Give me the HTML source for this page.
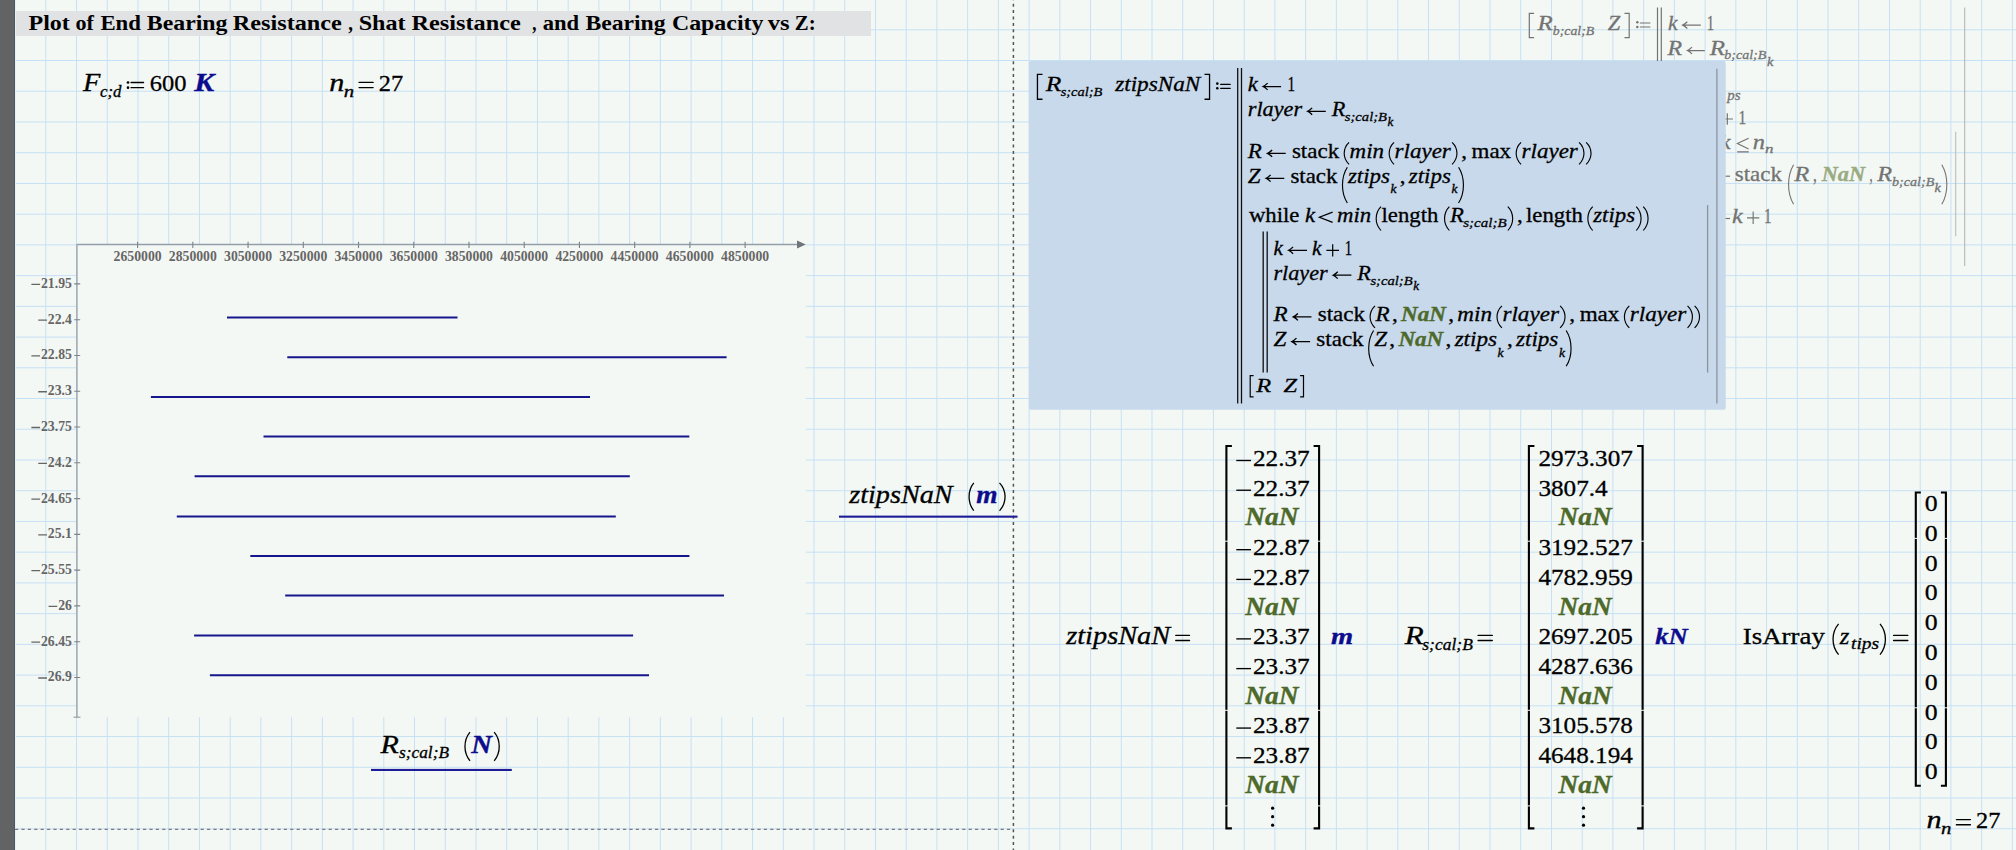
<!DOCTYPE html>
<html><head><meta charset="utf-8"><style>
html,body{margin:0;padding:0;width:2016px;height:850px;overflow:hidden;background:#f4f8f4}
svg{display:block}
text{font-family:"Liberation Serif",serif;white-space:pre}
.r{font-style:normal;font-weight:normal;stroke-width:.3px}
.i{font-style:italic;font-weight:normal;stroke-width:.3px}
.b{font-style:normal;font-weight:bold;stroke-width:0}
.bi{font-style:italic;font-weight:bold;stroke-width:.35px}
</style></head><body>
<svg width="2016" height="850" viewBox="0 0 2016 850">
<rect x="0" y="0" width="2016" height="850" fill="#f4f8f4"/>
<path d="M45.80 0V850M76.53 0V850M107.25 0V850M137.98 0V850M168.71 0V850M199.44 0V850M230.17 0V850M260.89 0V850M291.62 0V850M322.35 0V850M353.08 0V850M383.81 0V850M414.53 0V850M445.26 0V850M475.99 0V850M506.72 0V850M537.45 0V850M568.17 0V850M598.90 0V850M629.63 0V850M660.36 0V850M691.09 0V850M721.81 0V850M752.54 0V850M783.27 0V850M814.00 0V850M844.73 0V850M875.45 0V850M906.18 0V850M936.91 0V850M967.64 0V850M998.37 0V850M1029.09 0V850M1059.82 0V850M1090.55 0V850M1121.28 0V850M1152.01 0V850M1182.73 0V850M1213.46 0V850M1244.19 0V850M1274.92 0V850M1305.65 0V850M1336.37 0V850M1367.10 0V850M1397.83 0V850M1428.56 0V850M1459.29 0V850M1490.01 0V850M1520.74 0V850M1551.47 0V850M1582.20 0V850M1612.93 0V850M1643.65 0V850M1674.38 0V850M1705.11 0V850M1735.84 0V850M1766.57 0V850M1797.29 0V850M1828.02 0V850M1858.75 0V850M1889.48 0V850M1920.21 0V850M1950.93 0V850M1981.66 0V850M2012.39 0V850M15 29.80H2016M15 60.53H2016M15 91.25H2016M15 121.98H2016M15 152.71H2016M15 183.44H2016M15 214.17H2016M15 244.89H2016M15 275.62H2016M15 306.35H2016M15 337.08H2016M15 367.81H2016M15 398.53H2016M15 429.26H2016M15 459.99H2016M15 490.72H2016M15 521.45H2016M15 552.17H2016M15 582.90H2016M15 613.63H2016M15 644.36H2016M15 675.09H2016M15 705.81H2016M15 736.54H2016M15 767.27H2016M15 798.00H2016M15 828.73H2016" stroke="#c6e0f5" stroke-width="1" fill="none"/>
<rect x="0" y="0" width="15" height="850" fill="#626364"/>
<rect x="14" y="0" width="1" height="850" fill="#56575a"/>
<rect x="15" y="0" width="1" height="850" fill="#e3f1fa"/>
<path d="M1013.4 -2.7V850" stroke="#555" stroke-width="1.5" stroke-dasharray="3 3.4" fill="none"/>
<path d="M15 829.3H1011" stroke="#7c7c7c" stroke-width="1.2" stroke-dasharray="3.2 3.2" fill="none"/>
<rect x="16" y="11" width="855" height="25" fill="#e1e2e4"/>
<text class="b" font-size="22" fill="#000" stroke="#000" transform="translate(28.50,30.00) scale(1.0891,1.0000)">Plot</text>
<text class="b" font-size="22" fill="#000" stroke="#000" transform="translate(75.40,30.00) scale(1.0040,1.0000)">of</text>
<text class="b" font-size="22" fill="#000" stroke="#000" transform="translate(100.40,30.00) scale(1.0377,1.0000)">End</text>
<text class="b" font-size="22" fill="#000" stroke="#000" transform="translate(146.80,30.00) scale(1.0832,1.0000)">Bearing</text>
<text class="b" font-size="22" fill="#000" stroke="#000" transform="translate(232.70,30.00) scale(1.1040,1.0000)">Resistance</text>
<text class="b" font-size="22" fill="#000" stroke="#000" transform="translate(348.30,30.00) scale(0.8545,1.0000)">,</text>
<text class="b" font-size="22" fill="#000" stroke="#000" transform="translate(358.70,30.00) scale(1.0971,1.0000)">Shat</text>
<text class="b" font-size="22" fill="#000" stroke="#000" transform="translate(411.50,30.00) scale(1.1040,1.0000)">Resistance</text>
<text class="b" font-size="22" fill="#000" stroke="#000" transform="translate(532.30,30.00) scale(0.7636,1.0000)">,</text>
<text class="b" font-size="22" fill="#000" stroke="#000" transform="translate(542.70,30.00) scale(1.0282,1.0000)">and</text>
<text class="b" font-size="22" fill="#000" stroke="#000" transform="translate(585.40,30.00) scale(1.0765,1.0000)">Bearing</text>
<text class="b" font-size="22" fill="#000" stroke="#000" transform="translate(671.90,30.00) scale(1.0856,1.0000)">Capacity</text>
<text class="b" font-size="22" fill="#000" stroke="#000" transform="translate(767.70,30.00) scale(1.1159,1.0000)">vs</text>
<text class="b" font-size="22" fill="#000" stroke="#000" transform="translate(794.80,30.00) scale(0.9455,1.0000)">Z:</text>
<text class="i" font-size="25" fill="#000" stroke="#000" transform="translate(83.08,91.00) scale(1.1365,1.0000)">F</text>
<text class="i" font-size="16" fill="#000" stroke="#000" transform="translate(99.90,96.80) scale(1.0537,1.0000)">c;d</text>
<path d="M131.05 82.50H143.55M131.05 87.70H143.55" stroke="#000" stroke-width="1.3" stroke-linecap="round" fill="none"/><circle cx="128.00" cy="82.50" r="1.35" fill="#000"/><circle cx="128.00" cy="87.70" r="1.35" fill="#000"/>
<text class="r" font-size="24" fill="#000" stroke="#000" transform="translate(149.80,91.00) scale(1.0222,1.0000)">600</text>
<text class="bi" font-size="25" fill="#0c0c8e" stroke="#0c0c8e" transform="translate(194.30,91.00) scale(1.1973,1.0000)">K</text>
<text class="i" font-size="24.5" fill="#000" stroke="#000" transform="translate(329.20,90.80) scale(1.2327,1.0000)">n</text>
<text class="i" font-size="16" fill="#000" stroke="#000" transform="translate(343.80,96.70) scale(1.3000,1.0000)">n</text>
<path d="M359.07 82.40H373.12M359.07 87.60H373.12" stroke="#000" stroke-width="1.35" stroke-linecap="round" fill="none"/>
<text class="r" font-size="24" fill="#000" stroke="#000" transform="translate(378.80,90.80) scale(1.0125,1.0000)">27</text>
<rect x="76.9" y="244.6" width="728.9" height="472.6" fill="#f4f8f4"/>
<path d="M76.9 244.6H798" stroke="#959ea8" stroke-width="1.5" fill="none"/>
<path d="M797 240.6L805.8 244.6L797 248.6Z" fill="#6f757b"/>
<path d="M76.9 243.9V717.2" stroke="#a2abb5" stroke-width="1.6" fill="none"/>
<path d="M73.5 717.2H80.5" stroke="#9a9ea2" stroke-width="1.2" fill="none"/>
<path d="M137.60 241.8V248M192.83 241.8V248M248.06 241.8V248M303.29 241.8V248M358.52 241.8V248M413.75 241.8V248M468.98 241.8V248M524.21 241.8V248M579.44 241.8V248M634.67 241.8V248M689.90 241.8V248M745.13 241.8V248M74.2 283.90H80.2M74.2 319.68H80.2M74.2 355.46H80.2M74.2 391.24H80.2M74.2 427.02H80.2M74.2 462.80H80.2M74.2 498.58H80.2M74.2 534.36H80.2M74.2 570.14H80.2M74.2 605.92H80.2M74.2 641.70H80.2M74.2 677.48H80.2" stroke="#7d8389" stroke-width="1.1" fill="none"/>
<text class="b" font-size="14.0" fill="#666666" stroke="#666666" transform="translate(113.55,261.20) scale(0.9816,1.0000)">2650000</text>
<text class="b" font-size="14.0" fill="#666666" stroke="#666666" transform="translate(168.78,261.20) scale(0.9816,1.0000)">2850000</text>
<text class="b" font-size="14.0" fill="#666666" stroke="#666666" transform="translate(224.01,261.20) scale(0.9816,1.0000)">3050000</text>
<text class="b" font-size="14.0" fill="#666666" stroke="#666666" transform="translate(279.24,261.20) scale(0.9816,1.0000)">3250000</text>
<text class="b" font-size="14.0" fill="#666666" stroke="#666666" transform="translate(334.47,261.20) scale(0.9816,1.0000)">3450000</text>
<text class="b" font-size="14.0" fill="#666666" stroke="#666666" transform="translate(389.70,261.20) scale(0.9816,1.0000)">3650000</text>
<text class="b" font-size="14.0" fill="#666666" stroke="#666666" transform="translate(444.93,261.20) scale(0.9816,1.0000)">3850000</text>
<text class="b" font-size="14.0" fill="#666666" stroke="#666666" transform="translate(500.16,261.20) scale(0.9816,1.0000)">4050000</text>
<text class="b" font-size="14.0" fill="#666666" stroke="#666666" transform="translate(555.39,261.20) scale(0.9816,1.0000)">4250000</text>
<text class="b" font-size="14.0" fill="#666666" stroke="#666666" transform="translate(610.62,261.20) scale(0.9816,1.0000)">4450000</text>
<text class="b" font-size="14.0" fill="#666666" stroke="#666666" transform="translate(665.85,261.20) scale(0.9816,1.0000)">4650000</text>
<text class="b" font-size="14.0" fill="#666666" stroke="#666666" transform="translate(721.08,261.20) scale(0.9816,1.0000)">4850000</text>
<text class="b" font-size="14.0" fill="#666666" stroke="#666666" transform="translate(40.98,287.90) scale(0.9816,1.0000)">21.95</text>
<text class="b" font-size="14.0" fill="#666666" stroke="#666666" transform="translate(47.85,323.68) scale(0.9816,1.0000)">22.4</text>
<text class="b" font-size="14.0" fill="#666666" stroke="#666666" transform="translate(40.98,359.46) scale(0.9816,1.0000)">22.85</text>
<text class="b" font-size="14.0" fill="#666666" stroke="#666666" transform="translate(47.85,395.24) scale(0.9816,1.0000)">23.3</text>
<text class="b" font-size="14.0" fill="#666666" stroke="#666666" transform="translate(40.98,431.02) scale(0.9816,1.0000)">23.75</text>
<text class="b" font-size="14.0" fill="#666666" stroke="#666666" transform="translate(47.85,466.80) scale(0.9816,1.0000)">24.2</text>
<text class="b" font-size="14.0" fill="#666666" stroke="#666666" transform="translate(40.98,502.58) scale(0.9816,1.0000)">24.65</text>
<text class="b" font-size="14.0" fill="#666666" stroke="#666666" transform="translate(47.85,538.36) scale(0.9816,1.0000)">25.1</text>
<text class="b" font-size="14.0" fill="#666666" stroke="#666666" transform="translate(40.98,574.14) scale(0.9816,1.0000)">25.55</text>
<text class="b" font-size="14.0" fill="#666666" stroke="#666666" transform="translate(58.16,609.92) scale(0.9816,1.0000)">26</text>
<text class="b" font-size="14.0" fill="#666666" stroke="#666666" transform="translate(40.98,645.70) scale(0.9816,1.0000)">26.45</text>
<text class="b" font-size="14.0" fill="#666666" stroke="#666666" transform="translate(47.85,681.48) scale(0.9816,1.0000)">26.9</text>
<path d="M31.38 284.40H40.08M38.25 320.18H46.95M31.38 355.96H40.08M38.25 391.74H46.95M31.38 427.52H40.08M38.25 463.30H46.95M31.38 499.08H40.08M38.25 534.86H46.95M31.38 570.64H40.08M48.56 606.42H57.26M31.38 642.20H40.08M38.25 677.98H46.95" stroke="#666666" stroke-width="1.3" fill="none"/>
<path d="M227.0 317.6H457.5M287.3 357.2H726.6M150.9 397.0H590.0M263.5 436.6H689.3M194.6 476.2H629.8M176.8 516.4H615.8M250.3 556.0H689.4M285.2 595.6H724.0M194.1 635.6H633.1M209.9 675.3H649.0" stroke="#16168c" stroke-width="2" fill="none"/>
<text class="i" font-size="25" fill="#000" stroke="#000" transform="translate(380.50,753.30) scale(1.2000,1.0000)">R</text>
<text class="i" font-size="16.5" fill="#000" stroke="#000" transform="translate(399.00,758.00) scale(1.0499,1.0000)">s;cal;B</text>
<path d="M470.00 732.20C463.30 740.24 463.30 752.86 470.00 760.90" stroke="#000" stroke-width="1.3" fill="none"/>
<text class="bi" font-size="25" fill="#0c0c8e" stroke="#0c0c8e" transform="translate(471.19,753.30) scale(1.1451,1.0000)">N</text>
<path d="M494.20 732.20C500.90 740.24 500.90 752.86 494.20 760.90" stroke="#000" stroke-width="1.3" fill="none"/>
<rect x="371" y="768.9" width="140.8" height="2.1" fill="#1c1c96"/>
<text class="i" font-size="25" fill="#000" stroke="#000" transform="translate(849.22,502.70) scale(1.1282,1.0000)">ztipsNaN</text>
<path d="M973.80 482.90C967.50 490.68 967.50 502.92 973.80 510.70" stroke="#000" stroke-width="1.3" fill="none"/>
<text class="bi" font-size="25" fill="#0c0c8e" stroke="#0c0c8e" transform="translate(976.30,502.70) scale(1.0974,1.0000)">m</text>
<path d="M999.50 482.90C1006.90 490.68 1006.90 502.92 999.50 510.70" stroke="#000" stroke-width="1.3" fill="none"/>
<rect x="839" y="515.6" width="178.5" height="2.1" fill="#1c1c96"/>
<path d="M1534.10 13.30H1529.30V37.60H1534.10" stroke="#737373" stroke-width="1.2" fill="none"/>
<text class="i" font-size="20.5" fill="#737373" stroke="#737373" transform="translate(1537.55,29.50) scale(1.2198,1.0000)">R</text>
<text class="i" font-size="13.5" fill="#737373" stroke="#737373" transform="translate(1552.80,35.10) scale(1.0247,1.0000)">b;cal;B</text>
<text class="i" font-size="20.5" fill="#737373" stroke="#737373" transform="translate(1607.70,29.50) scale(1.0925,1.0000)">Z</text>
<path d="M1624.50 13.30H1629.20V37.60H1624.50" stroke="#737373" stroke-width="1.2" fill="none"/>
<path d="M1640.40 23.00H1650.00M1640.40 27.00H1650.00" stroke="#737373" stroke-width="1.2" stroke-linecap="round" fill="none"/><circle cx="1637.30" cy="22.20" r="1.25" fill="#737373"/><circle cx="1637.30" cy="26.90" r="1.25" fill="#737373"/>
<path d="M1657.5 7.4V61M1661.3 7.4V61" stroke="#737373" stroke-width="1.2" fill="none"/>
<text class="i" font-size="20.5" fill="#737373" stroke="#737373" transform="translate(1668.00,29.50) scale(1.0526,1.0000)">k</text>
<path d="M1700.80 25.10H1683.30M1687.30 21.70Q1684.77 24.20 1682.70 25.10Q1684.77 26.00 1687.30 28.50" stroke="#737373" stroke-width="1.25" fill="none"/>
<text class="r" font-size="20.5" fill="#737373" stroke="#737373" transform="translate(1706.80,29.50) scale(0.7220,1.0000)">1</text>
<text class="i" font-size="20.5" fill="#737373" stroke="#737373" transform="translate(1667.45,54.90) scale(1.1644,1.0000)">R</text>
<path d="M1704.80 50.50H1688.00M1692.00 47.10Q1689.47 49.60 1687.40 50.50Q1689.47 51.40 1692.00 53.90" stroke="#737373" stroke-width="1.25" fill="none"/>
<text class="i" font-size="20.5" fill="#737373" stroke="#737373" transform="translate(1709.65,54.90) scale(1.2198,1.0000)">R</text>
<text class="i" font-size="13.5" fill="#737373" stroke="#737373" transform="translate(1724.20,58.90) scale(1.0420,1.0000)">b;cal;B</text>
<text class="i" font-size="12" fill="#737373" stroke="#737373" transform="translate(1767.10,65.60) scale(1.1911,1.0000)">k</text>
<text class="i" font-size="14.5" fill="#737373" stroke="#737373" transform="translate(1727.20,100.30) scale(1.0255,1.0000)">ps</text>
<path d="M1721.5 119H1733M1727.3 113.3V124.7" stroke="#737373" stroke-width="1.2" fill="none"/>
<text class="r" font-size="18.5" fill="#737373" stroke="#737373" transform="translate(1738.50,123.60) scale(0.8216,1.0000)">1</text>
<text class="i" font-size="20.5" fill="#737373" stroke="#737373" transform="translate(1720.00,148.70) scale(1.1579,1.0000)">k</text>
<path d="M1748.6 138.2L1737.4 143.6L1748.6 149M1737.2 151.8H1748.8" stroke="#737373" stroke-width="1.15" fill="none"/>
<text class="i" font-size="20.5" fill="#737373" stroke="#737373" transform="translate(1752.70,148.70) scale(1.1902,1.0000)">n</text>
<text class="i" font-size="13.5" fill="#737373" stroke="#737373" transform="translate(1764.90,152.50) scale(1.2593,1.0000)">n</text>
<path d="M1722 176.2H1730" stroke="#737373" stroke-width="1.2"/>
<text class="r" font-size="20.5" fill="#737373" stroke="#737373" transform="translate(1734.80,180.80) scale(1.1181,1.0000)">stack</text>
<path d="M1793.60 164.70C1786.90 175.79 1786.90 193.21 1793.60 204.30" stroke="#737373" stroke-width="1.1" fill="none"/>
<text class="i" font-size="20.5" fill="#737373" stroke="#737373" transform="translate(1794.25,180.80) scale(1.1960,1.0000)">R</text>
<text class="r" font-size="20.5" fill="#737373" stroke="#737373" transform="translate(1812.90,180.80) scale(0.7415,1.0000)">,</text>
<text class="bi" font-size="20.5" fill="#9aab82" stroke="#9aab82" transform="translate(1821.67,180.80) scale(1.0871,1.0000)">NaN</text>
<text class="r" font-size="20.5" fill="#737373" stroke="#737373" transform="translate(1869.40,180.80) scale(0.6049,1.0000)">,</text>
<text class="i" font-size="20.5" fill="#737373" stroke="#737373" transform="translate(1877.15,180.80) scale(1.1881,1.0000)">R</text>
<text class="i" font-size="13.5" fill="#737373" stroke="#737373" transform="translate(1892.00,186.40) scale(1.0469,1.0000)">b;cal;B</text>
<text class="i" font-size="12" fill="#737373" stroke="#737373" transform="translate(1934.40,192.00) scale(1.1733,1.0000)">k</text>
<path d="M1941.80 164.70C1948.50 175.79 1948.50 193.21 1941.80 204.30" stroke="#737373" stroke-width="1.1" fill="none"/>
<path d="M1722 218.5H1730" stroke="#737373" stroke-width="1.2"/>
<text class="i" font-size="20.5" fill="#737373" stroke="#737373" transform="translate(1732.00,223.10) scale(1.1789,1.0000)">k</text>
<path d="M1747 217.8H1759.3M1753.15 211.6V224" stroke="#737373" stroke-width="1.15" fill="none"/>
<text class="r" font-size="20.5" fill="#737373" stroke="#737373" transform="translate(1764.00,223.10) scale(0.7317,1.0000)">1</text>
<path d="M1964.7 7.4V266" stroke="#b5b5b5" stroke-width="1.1" fill="none"/>
<path d="M1955.7 131.8V236.3" stroke="#bdbdbd" stroke-width="1.1" fill="none"/>
<rect x="1028.9" y="60.9" width="696.8" height="348.9" rx="2" fill="#c8d9eb"/>
<path d="M1042.50 74.45H1037.45V99.25H1042.50" stroke="#000" stroke-width="1.3" fill="none"/>
<text class="i" font-size="20.5" fill="#000" stroke="#000" transform="translate(1045.76,91.00) scale(1.2436,1.0000)">R</text>
<text class="i" font-size="13.5" fill="#000" stroke="#000" transform="translate(1060.70,96.20) scale(1.0692,1.0000)">s;cal;B</text>
<text class="i" font-size="20.5" fill="#000" stroke="#000" transform="translate(1115.18,91.00) scale(1.1326,1.0000)">ztipsNaN</text>
<path d="M1204.50 74.45H1209.55V99.25H1204.50" stroke="#000" stroke-width="1.3" fill="none"/>
<path d="M1220.72 84.40H1230.17M1220.72 88.40H1230.17" stroke="#000" stroke-width="1.25" stroke-linecap="round" fill="none"/><circle cx="1217.30" cy="83.60" r="1.3" fill="#000"/><circle cx="1217.30" cy="88.30" r="1.3" fill="#000"/>
<path d="M1237.7 68.1V403.6M1241.5 68.1V403.6" stroke="#111" stroke-width="1.3" fill="none"/>
<path d="M1263.2 231.4V372.6M1267.2 231.4V372.6" stroke="#111" stroke-width="1.3" fill="none"/>
<path d="M1716.9 68.7V403.6" stroke="#8b949d" stroke-width="1.3" fill="none"/>
<path d="M1707.6 205V372.6" stroke="#8b949d" stroke-width="1.3" fill="none"/>
<text class="i" font-size="20.5" fill="#000" stroke="#000" transform="translate(1247.80,90.90) scale(1.1053,1.0000)">k</text>
<path d="M1281.10 86.50H1263.60M1267.60 83.10Q1265.07 85.60 1263.00 86.50Q1265.07 87.40 1267.60 89.90" stroke="#000" stroke-width="1.25" fill="none"/>
<text class="r" font-size="20.5" fill="#000" stroke="#000" transform="translate(1287.40,90.90) scale(0.7415,1.0000)">1</text>
<g transform="translate(1247.80,115.70) scale(1.0841,1)"><text class="i" x="0.00" y="0.00" font-size="20.5" fill="#000" stroke="#000">rlayer</text><path d="M71.95 -4.40H55.66M59.34 -7.80Q57.01 -5.30 55.10 -4.40Q57.01 -3.50 59.34 -1.00" stroke="#000" stroke-width="1.25" fill="none"/><text class="i" x="77.45" y="0.00" font-size="20.5" fill="#000" stroke="#000">R</text><text class="i" x="89.47" y="5.30" font-size="13.5" fill="#000" stroke="#000">s;cal;B</text><text class="i" x="128.96" y="10.80" font-size="12" fill="#000" stroke="#000">k</text></g>
<g transform="translate(1247.84,157.80) scale(1.1227,1)"><text class="i" x="0.00" y="0.00" font-size="20.5" fill="#000" stroke="#000">R</text><path d="M33.74 -4.40H18.06M21.62 -7.80Q19.37 -5.30 17.52 -4.40Q19.37 -3.50 21.62 -1.00" stroke="#000" stroke-width="1.25" fill="none"/><text class="r" x="39.24" y="0.00" font-size="20.5" fill="#000" stroke="#000">stack</text><path d="M90.16 -15.50C84.36 -9.31 84.36 0.41 90.16 6.60" stroke="#000" stroke-width="1.024" fill="none"/><text class="i" x="90.66" y="0.00" font-size="20.5" fill="#000" stroke="#000">min</text><path d="M130.21 -15.50C124.41 -9.31 124.41 0.41 130.21 6.60" stroke="#000" stroke-width="1.024" fill="none"/><text class="i" x="130.71" y="0.00" font-size="20.5" fill="#000" stroke="#000">rlayer</text><path d="M181.92 -15.50C187.72 -9.31 187.72 0.41 181.92 6.60" stroke="#000" stroke-width="1.024" fill="none"/><text class="r" x="190.12" y="0.00" font-size="20.5" fill="#000" stroke="#000">,</text><text class="r" x="199.24" y="0.00" font-size="20.5" fill="#000" stroke="#000">max</text><path d="M243.34 -15.50C237.54 -9.31 237.54 0.41 243.34 6.60" stroke="#000" stroke-width="1.024" fill="none"/><text class="i" x="243.84" y="0.00" font-size="20.5" fill="#000" stroke="#000">rlayer</text><path d="M295.04 -15.50C300.84 -9.31 300.84 0.41 295.04 6.60" stroke="#000" stroke-width="1.024" fill="none"/><path d="M301.34 -15.50C307.14 -9.31 307.14 0.41 301.34 6.60" stroke="#000" stroke-width="1.024" fill="none"/></g>
<g transform="translate(1247.70,182.70) scale(1.1173,1)"><text class="i" x="0.00" y="0.00" font-size="20.5" fill="#000" stroke="#000">Z</text><path d="M32.75 -4.40H16.94M20.52 -7.80Q18.25 -5.30 16.40 -4.40Q18.25 -3.50 20.52 -1.00" stroke="#000" stroke-width="1.25" fill="none"/><text class="r" x="38.25" y="0.00" font-size="20.5" fill="#000" stroke="#000">stack</text><path d="M89.17 -15.50C83.37 -5.48 83.37 10.28 89.17 20.30" stroke="#000" stroke-width="1.029" fill="none"/><text class="i" x="89.67" y="0.00" font-size="20.5" fill="#000" stroke="#000">ztips</text><text class="i" x="127.77" y="10.70" font-size="12" fill="#000" stroke="#000">k</text><text class="r" x="136.09" y="0.00" font-size="20.5" fill="#000" stroke="#000">,</text><text class="i" x="144.22" y="0.00" font-size="20.5" fill="#000" stroke="#000">ztips</text><text class="i" x="182.32" y="10.70" font-size="12" fill="#000" stroke="#000">k</text><path d="M188.74 -15.50C194.54 -5.48 194.54 10.28 188.74 20.30" stroke="#000" stroke-width="1.029" fill="none"/></g>
<g transform="translate(1248.90,221.60) scale(1.1111,1)"><text class="r" x="0.00" y="0.00" font-size="20.5" fill="#000" stroke="#000">while</text><text class="i" x="50.54" y="0.00" font-size="20.5" fill="#000" stroke="#000">k</text><path d="M75.34 -9.5L63.44 -4.3L75.34 0.8" stroke="#000" stroke-width="1.2" fill="none"/><text class="i" x="79.34" y="0.00" font-size="20.5" fill="#000" stroke="#000">min</text><path d="M118.89 -14.90C113.09 -8.24 113.09 2.24 118.89 8.90" stroke="#000" stroke-width="1.035" fill="none"/><text class="r" x="119.39" y="0.00" font-size="20.5" fill="#000" stroke="#000">length</text><path d="M180.43 -14.90C174.63 -8.24 174.63 2.24 180.43 8.90" stroke="#000" stroke-width="1.035" fill="none"/><text class="i" x="180.93" y="0.00" font-size="20.5" fill="#000" stroke="#000">R</text><text class="i" x="192.96" y="5.30" font-size="13.5" fill="#000" stroke="#000">s;cal;B</text><path d="M233.04 -14.90C238.84 -8.24 238.84 2.24 233.04 8.90" stroke="#000" stroke-width="1.035" fill="none"/><text class="r" x="241.24" y="0.00" font-size="20.5" fill="#000" stroke="#000">,</text><text class="r" x="249.37" y="0.00" font-size="20.5" fill="#000" stroke="#000">length</text><path d="M309.41 -14.90C303.61 -8.24 303.61 2.24 309.41 8.90" stroke="#000" stroke-width="1.035" fill="none"/><text class="i" x="309.91" y="0.00" font-size="20.5" fill="#000" stroke="#000">ztips</text><path d="M348.60 -14.90C354.40 -8.24 354.40 2.24 348.60 8.90" stroke="#000" stroke-width="1.035" fill="none"/><path d="M354.90 -14.90C360.70 -8.24 360.70 2.24 354.90 8.90" stroke="#000" stroke-width="1.035" fill="none"/></g>
<text class="i" font-size="20.5" fill="#000" stroke="#000" transform="translate(1273.50,254.70) scale(1.0316,1.0000)">k</text>
<path d="M1307.00 250.30H1289.10M1293.10 246.90Q1290.57 249.40 1288.50 250.30Q1290.57 251.20 1293.10 253.70" stroke="#000" stroke-width="1.25" fill="none"/>
<text class="i" font-size="20.5" fill="#000" stroke="#000" transform="translate(1312.00,254.70) scale(1.0421,1.0000)">k</text>
<path d="M1326.4 250.4H1339M1332.7 244.2V256.5" stroke="#000" stroke-width="1.2" fill="none"/>
<text class="r" font-size="20.5" fill="#000" stroke="#000" transform="translate(1344.70,254.70) scale(0.7122,1.0000)">1</text>
<g transform="translate(1273.40,279.60) scale(1.0841,1)"><text class="i" x="0.00" y="0.00" font-size="20.5" fill="#000" stroke="#000">rlayer</text><path d="M71.95 -4.40H55.66M59.34 -7.80Q57.01 -5.30 55.10 -4.40Q57.01 -3.50 59.34 -1.00" stroke="#000" stroke-width="1.25" fill="none"/><text class="i" x="77.45" y="0.00" font-size="20.5" fill="#000" stroke="#000">R</text><text class="i" x="89.47" y="5.30" font-size="13.5" fill="#000" stroke="#000">s;cal;B</text><text class="i" x="128.96" y="10.80" font-size="12" fill="#000" stroke="#000">k</text></g>
<g transform="translate(1273.54,321.30) scale(1.1262,1)"><text class="i" x="0.00" y="0.00" font-size="20.5" fill="#000" stroke="#000">R</text><path d="M33.68 -4.40H18.05M21.61 -7.80Q19.36 -5.30 17.52 -4.40Q19.36 -3.50 21.61 -1.00" stroke="#000" stroke-width="1.25" fill="none"/><text class="r" x="39.18" y="0.00" font-size="20.5" fill="#000" stroke="#000">stack</text><path d="M90.10 -15.50C84.30 -9.31 84.30 0.41 90.10 6.60" stroke="#000" stroke-width="1.021" fill="none"/><text class="i" x="90.60" y="0.00" font-size="20.5" fill="#000" stroke="#000">R</text><text class="r" x="105.12" y="0.00" font-size="20.5" fill="#000" stroke="#000">,</text><text class="bi" x="113.24" y="0.00" font-size="20.5" fill="#4e6a2b" stroke="#4e6a2b">NaN</text><text class="r" x="155.10" y="0.00" font-size="20.5" fill="#000" stroke="#000">,</text><text class="i" x="163.23" y="0.00" font-size="20.5" fill="#000" stroke="#000">min</text><path d="M202.78 -15.50C196.98 -9.31 196.98 0.41 202.78 6.60" stroke="#000" stroke-width="1.021" fill="none"/><text class="i" x="203.28" y="0.00" font-size="20.5" fill="#000" stroke="#000">rlayer</text><path d="M254.48 -15.50C260.28 -9.31 260.28 0.41 254.48 6.60" stroke="#000" stroke-width="1.021" fill="none"/><text class="r" x="262.68" y="0.00" font-size="20.5" fill="#000" stroke="#000">,</text><text class="r" x="271.81" y="0.00" font-size="20.5" fill="#000" stroke="#000">max</text><path d="M315.90 -15.50C310.10 -9.31 310.10 0.41 315.90 6.60" stroke="#000" stroke-width="1.021" fill="none"/><text class="i" x="316.40" y="0.00" font-size="20.5" fill="#000" stroke="#000">rlayer</text><path d="M367.60 -15.50C373.40 -9.31 373.40 0.41 367.60 6.60" stroke="#000" stroke-width="1.021" fill="none"/><path d="M373.90 -15.50C379.70 -9.31 379.70 0.41 373.90 6.60" stroke="#000" stroke-width="1.021" fill="none"/></g>
<g transform="translate(1273.40,346.00) scale(1.1255,1)"><text class="i" x="0.00" y="0.00" font-size="20.5" fill="#000" stroke="#000">Z</text><path d="M32.60 -4.40H16.93M20.49 -7.80Q18.24 -5.30 16.40 -4.40Q18.24 -3.50 20.49 -1.00" stroke="#000" stroke-width="1.25" fill="none"/><text class="r" x="38.10" y="0.00" font-size="20.5" fill="#000" stroke="#000">stack</text><path d="M89.02 -15.50C83.22 -5.48 83.22 10.28 89.02 20.30" stroke="#000" stroke-width="1.022" fill="none"/><text class="i" x="89.52" y="0.00" font-size="20.5" fill="#000" stroke="#000">Z</text><text class="r" x="102.92" y="0.00" font-size="20.5" fill="#000" stroke="#000">,</text><text class="bi" x="111.05" y="0.00" font-size="20.5" fill="#4e6a2b" stroke="#4e6a2b">NaN</text><text class="r" x="152.91" y="0.00" font-size="20.5" fill="#000" stroke="#000">,</text><text class="i" x="161.03" y="0.00" font-size="20.5" fill="#000" stroke="#000">ztips</text><text class="i" x="199.13" y="10.70" font-size="12" fill="#000" stroke="#000">k</text><text class="r" x="207.45" y="0.00" font-size="20.5" fill="#000" stroke="#000">,</text><text class="i" x="215.58" y="0.00" font-size="20.5" fill="#000" stroke="#000">ztips</text><text class="i" x="253.68" y="10.70" font-size="12" fill="#000" stroke="#000">k</text><path d="M260.10 -15.50C265.90 -5.48 265.90 10.28 260.10 20.30" stroke="#000" stroke-width="1.022" fill="none"/></g>
<path d="M1253.60 375.70H1250.20V396.90H1253.60" stroke="#000" stroke-width="1.2" fill="none"/>
<path d="M1300.10 375.70H1303.50V396.90H1300.10" stroke="#000" stroke-width="1.2" fill="none"/>
<g transform="translate(1256.16,391.60) scale(1.2484,1)"><text class="i" x="0.00" y="0.00" font-size="19.5" fill="#000" stroke="#000">R</text><text class="i" x="21.91" y="0.00" font-size="19.5" fill="#000" stroke="#000">Z</text></g>
<text class="i" font-size="26" fill="#000" stroke="#000" transform="translate(1066.21,644.00) scale(1.0907,1.0000)">ztipsNaN</text>
<path d="M1175.80 635.40H1189.50M1175.80 640.50H1189.50" stroke="#000" stroke-width="1.4" stroke-linecap="round" fill="none"/>
<path d="M1231.90 446.00H1226.40V828.40H1231.90M1313.60 446.00H1319.10V828.40H1313.60" stroke="#000" stroke-width="2.1" fill="none"/>
<text class="r" font-size="23.5" fill="#000" stroke="#000" transform="translate(1253.00,465.90) scale(1.0723,1.0000)">22.37</text>
<path d="M1236.3 460.50H1251.0" stroke="#000" stroke-width="1.35" fill="none"/>
<text class="r" font-size="23.5" fill="#000" stroke="#000" transform="translate(1253.00,495.63) scale(1.0723,1.0000)">22.37</text>
<path d="M1236.3 490.23H1251.0" stroke="#000" stroke-width="1.35" fill="none"/>
<text class="bi" font-size="25.2" fill="#4e6a2b" stroke="#4e6a2b" transform="translate(1245.27,525.36) scale(1.0873,1.0000)">NaN</text>
<text class="r" font-size="23.5" fill="#000" stroke="#000" transform="translate(1253.00,555.09) scale(1.0723,1.0000)">22.87</text>
<path d="M1236.3 549.69H1251.0" stroke="#000" stroke-width="1.35" fill="none"/>
<text class="r" font-size="23.5" fill="#000" stroke="#000" transform="translate(1253.00,584.82) scale(1.0723,1.0000)">22.87</text>
<path d="M1236.3 579.42H1251.0" stroke="#000" stroke-width="1.35" fill="none"/>
<text class="bi" font-size="25.2" fill="#4e6a2b" stroke="#4e6a2b" transform="translate(1245.27,614.55) scale(1.0873,1.0000)">NaN</text>
<text class="r" font-size="23.5" fill="#000" stroke="#000" transform="translate(1253.00,644.28) scale(1.0723,1.0000)">23.37</text>
<path d="M1236.3 638.88H1251.0" stroke="#000" stroke-width="1.35" fill="none"/>
<text class="r" font-size="23.5" fill="#000" stroke="#000" transform="translate(1253.00,674.01) scale(1.0723,1.0000)">23.37</text>
<path d="M1236.3 668.61H1251.0" stroke="#000" stroke-width="1.35" fill="none"/>
<text class="bi" font-size="25.2" fill="#4e6a2b" stroke="#4e6a2b" transform="translate(1245.27,703.74) scale(1.0873,1.0000)">NaN</text>
<text class="r" font-size="23.5" fill="#000" stroke="#000" transform="translate(1253.00,733.47) scale(1.0723,1.0000)">23.87</text>
<path d="M1236.3 728.07H1251.0" stroke="#000" stroke-width="1.35" fill="none"/>
<text class="r" font-size="23.5" fill="#000" stroke="#000" transform="translate(1253.00,763.20) scale(1.0723,1.0000)">23.87</text>
<path d="M1236.3 757.80H1251.0" stroke="#000" stroke-width="1.35" fill="none"/>
<text class="bi" font-size="25.2" fill="#4e6a2b" stroke="#4e6a2b" transform="translate(1245.27,792.93) scale(1.0873,1.0000)">NaN</text>
<circle cx="1272.6" cy="808.2" r="1.6" fill="#000"/><circle cx="1272.6" cy="816.7" r="1.6" fill="#000"/><circle cx="1272.6" cy="825.2" r="1.6" fill="#000"/>
<text class="bi" font-size="24" fill="#0c0c8e" stroke="#0c0c8e" transform="translate(1330.90,644.00) scale(1.1866,1.0000)">m</text>
<text class="i" font-size="26" fill="#000" stroke="#000" transform="translate(1404.80,644.00) scale(1.1969,1.0000)">R</text>
<text class="i" font-size="17" fill="#000" stroke="#000" transform="translate(1422.30,650.00) scale(1.0300,1.0000)">s;cal;B</text>
<path d="M1478.10 635.40H1492.30M1478.10 640.50H1492.30" stroke="#000" stroke-width="1.4" stroke-linecap="round" fill="none"/>
<path d="M1534.40 446.00H1528.90V828.40H1534.40M1637.10 446.00H1642.60V828.40H1637.10" stroke="#000" stroke-width="2.1" fill="none"/>
<text class="r" font-size="23.5" fill="#000" stroke="#000" transform="translate(1538.40,465.90) scale(1.0723,1.0000)">2973.307</text>
<text class="r" font-size="23.5" fill="#000" stroke="#000" transform="translate(1538.40,495.63) scale(1.0723,1.0000)">3807.4</text>
<text class="bi" font-size="25.2" fill="#4e6a2b" stroke="#4e6a2b" transform="translate(1558.47,525.36) scale(1.0853,1.0000)">NaN</text>
<text class="r" font-size="23.5" fill="#000" stroke="#000" transform="translate(1538.40,555.09) scale(1.0723,1.0000)">3192.527</text>
<text class="r" font-size="23.5" fill="#000" stroke="#000" transform="translate(1538.40,584.82) scale(1.0723,1.0000)">4782.959</text>
<text class="bi" font-size="25.2" fill="#4e6a2b" stroke="#4e6a2b" transform="translate(1558.47,614.55) scale(1.0853,1.0000)">NaN</text>
<text class="r" font-size="23.5" fill="#000" stroke="#000" transform="translate(1538.40,644.28) scale(1.0723,1.0000)">2697.205</text>
<text class="r" font-size="23.5" fill="#000" stroke="#000" transform="translate(1538.40,674.01) scale(1.0723,1.0000)">4287.636</text>
<text class="bi" font-size="25.2" fill="#4e6a2b" stroke="#4e6a2b" transform="translate(1558.47,703.74) scale(1.0853,1.0000)">NaN</text>
<text class="r" font-size="23.5" fill="#000" stroke="#000" transform="translate(1538.40,733.47) scale(1.0723,1.0000)">3105.578</text>
<text class="r" font-size="23.5" fill="#000" stroke="#000" transform="translate(1538.40,763.20) scale(1.0723,1.0000)">4648.194</text>
<text class="bi" font-size="25.2" fill="#4e6a2b" stroke="#4e6a2b" transform="translate(1558.47,792.93) scale(1.0853,1.0000)">NaN</text>
<circle cx="1583.5" cy="808.2" r="1.6" fill="#000"/><circle cx="1583.5" cy="816.7" r="1.6" fill="#000"/><circle cx="1583.5" cy="825.2" r="1.6" fill="#000"/>
<text class="bi" font-size="24" fill="#0c0c8e" stroke="#0c0c8e" transform="translate(1655.20,644.00) scale(1.1120,1.0000)">kN</text>
<text class="r" font-size="24" fill="#000" stroke="#000" transform="translate(1742.80,644.00) scale(1.1195,1.0000)">IsArray</text>
<path d="M1838.60 623.90C1831.20 632.50 1831.20 646.00 1838.60 654.60" stroke="#000" stroke-width="1.3" fill="none"/>
<text class="i" font-size="24" fill="#000" stroke="#000" transform="translate(1839.78,644.00) scale(1.0256,1.0000)">z</text>
<text class="i" font-size="17" fill="#000" stroke="#000" transform="translate(1851.00,649.00) scale(1.1429,1.0000)">tips</text>
<path d="M1880.00 623.90C1887.20 632.50 1887.20 646.00 1880.00 654.60" stroke="#000" stroke-width="1.3" fill="none"/>
<path d="M1893.60 635.40H1907.80M1893.60 640.50H1907.80" stroke="#000" stroke-width="1.4" stroke-linecap="round" fill="none"/>
<path d="M1920.80 492.50H1915.80V785.70H1920.80M1940.90 492.50H1945.90V785.70H1940.90" stroke="#000" stroke-width="2.1" fill="none"/>
<text class="r" font-size="23.5" fill="#000" stroke="#000" transform="translate(1924.70,511.00) scale(1.0979,1.0000)">0</text>
<text class="r" font-size="23.5" fill="#000" stroke="#000" transform="translate(1924.70,540.80) scale(1.0979,1.0000)">0</text>
<text class="r" font-size="23.5" fill="#000" stroke="#000" transform="translate(1924.70,570.60) scale(1.0979,1.0000)">0</text>
<text class="r" font-size="23.5" fill="#000" stroke="#000" transform="translate(1924.70,600.40) scale(1.0979,1.0000)">0</text>
<text class="r" font-size="23.5" fill="#000" stroke="#000" transform="translate(1924.70,630.20) scale(1.0979,1.0000)">0</text>
<text class="r" font-size="23.5" fill="#000" stroke="#000" transform="translate(1924.70,660.00) scale(1.0979,1.0000)">0</text>
<text class="r" font-size="23.5" fill="#000" stroke="#000" transform="translate(1924.70,689.80) scale(1.0979,1.0000)">0</text>
<text class="r" font-size="23.5" fill="#000" stroke="#000" transform="translate(1924.70,719.60) scale(1.0979,1.0000)">0</text>
<text class="r" font-size="23.5" fill="#000" stroke="#000" transform="translate(1924.70,749.40) scale(1.0979,1.0000)">0</text>
<text class="r" font-size="23.5" fill="#000" stroke="#000" transform="translate(1924.70,779.20) scale(1.0979,1.0000)">0</text>
<text class="i" font-size="24.5" fill="#000" stroke="#000" transform="translate(1926.50,828.00) scale(1.2327,1.0000)">n</text>
<text class="i" font-size="16" fill="#000" stroke="#000" transform="translate(1941.10,833.90) scale(1.3000,1.0000)">n</text>
<path d="M1956.40 819.60H1970.40M1956.40 824.80H1970.40" stroke="#000" stroke-width="1.4" stroke-linecap="round" fill="none"/>
<text class="r" font-size="24" fill="#000" stroke="#000" transform="translate(1976.10,828.00) scale(1.0125,1.0000)">27</text>
<path d="M1224.9 541.2h3M1317.6 541.2h3M1224.9 710.3h3M1317.6 710.3h3M1224.9 805.9h3M1317.6 805.9h3M1527.4 541.2h3M1641.1 541.2h3M1527.4 710.3h3M1641.1 710.3h3M1527.4 805.9h3M1641.1 805.9h3M1914.3 538.4h3M1944.4 538.4h3M1914.3 707.8h3M1944.4 707.8h3" stroke="#f9fcf9" stroke-width="1" fill="none"/>
</svg>
</body></html>
